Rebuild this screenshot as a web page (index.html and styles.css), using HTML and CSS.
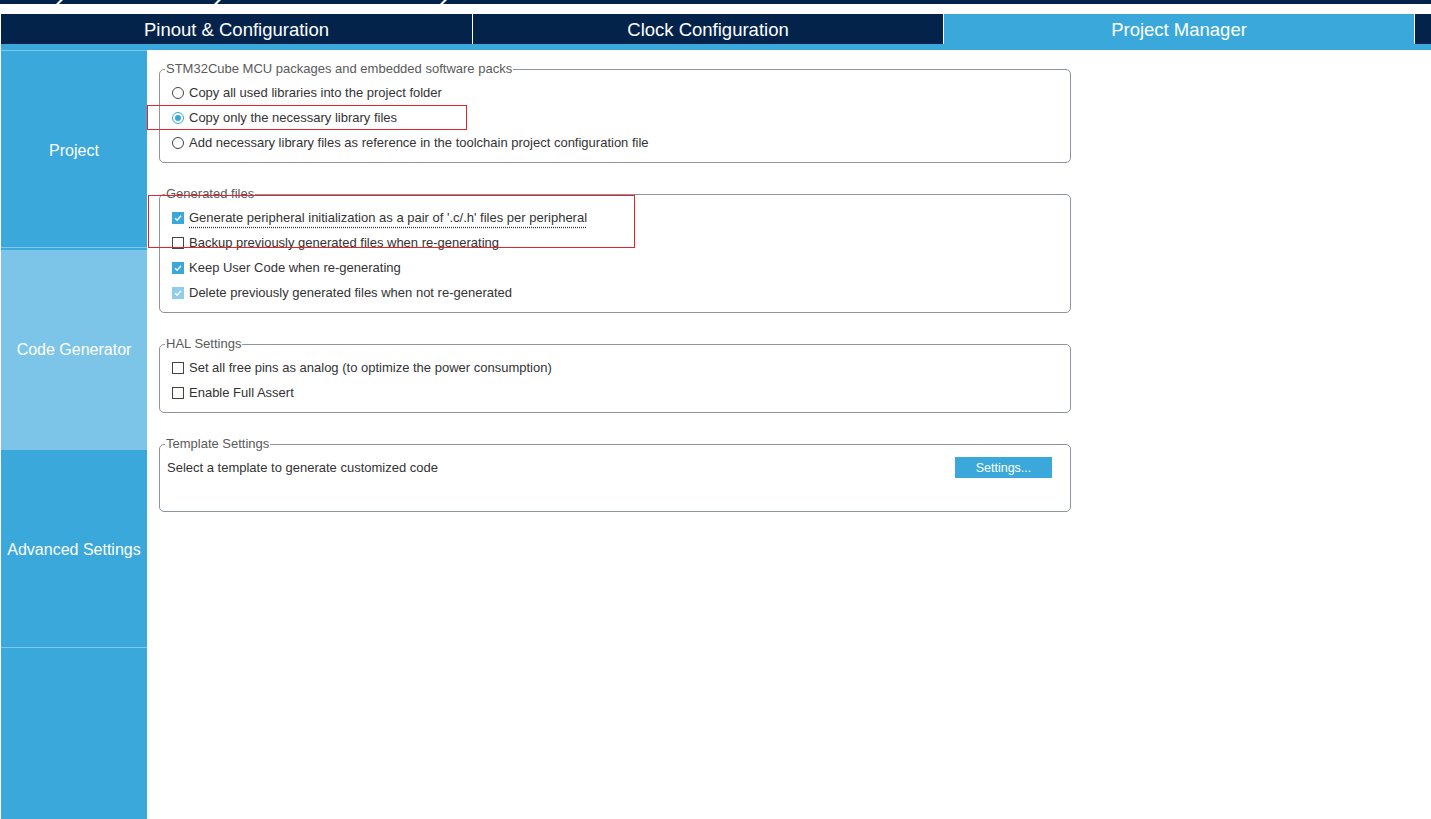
FILE: index.html
```html
<!DOCTYPE html>
<html lang="en">
<head>
  <meta charset="UTF-8" />
  <title>Project Manager</title>
  <link rel="stylesheet" href="styles.css">
</head>
<body>
  <div class="crumbs">
    <span class="c1"></span>
    <span class="c2"></span>
    <span class="c3"></span>
    <span class="c4"></span>
  </div>

  <nav class="tabs">
    <div class="tab first">Pinout &amp; Configuration</div>
    <div class="tab">Clock Configuration</div>
    <div class="tab active">Project Manager</div>
    <div class="tab-end"></div>
  </nav>
  <div class="band"></div>

  <div class="layout">
    <aside class="side">
      <div class="side-item">Project</div>
      <div class="side-item active">Code Generator</div>
      <div class="side-item">Advanced Settings</div>
      <div class="side-item"></div>
    </aside>

    <main class="content">
      <fieldset class="group">
        <legend>STM32Cube MCU packages and embedded software packs</legend>
        <div class="opts">
          <label class="opt"><span class="radio"></span>Copy all used libraries into the project folder</label>
          <label class="opt"><span class="radio on"></span>Copy only the necessary library files</label>
          <label class="opt"><span class="radio"></span>Add necessary library files as reference in the toolchain project configuration file</label>
        </div>
      </fieldset>

      <fieldset class="group">
        <legend>Generated files</legend>
        <div class="opts">
          <label class="opt">
            <span class="check on"><svg viewBox="0 0 12 12"><path d="M2.5 6.2 L5 8.6 L9.6 3.4" /></svg></span>
            <span class="focus">Generate peripheral initialization as a pair of '.c/.h' files per peripheral</span>
          </label>
          <label class="opt"><span class="check"></span>Backup previously generated files when re-generating</label>
          <label class="opt">
            <span class="check on"><svg viewBox="0 0 12 12"><path d="M2.5 6.2 L5 8.6 L9.6 3.4" /></svg></span>
            Keep User Code when re-generating
          </label>
          <label class="opt">
            <span class="check on dim"><svg viewBox="0 0 12 12"><path d="M2.5 6.2 L5 8.6 L9.6 3.4" /></svg></span>
            Delete previously generated files when not re-generated
          </label>
        </div>
      </fieldset>

      <fieldset class="group">
        <legend>HAL Settings</legend>
        <div class="opts">
          <label class="opt"><span class="check"></span>Set all free pins as analog (to optimize the power consumption)</label>
          <label class="opt"><span class="check"></span>Enable Full Assert</label>
        </div>
      </fieldset>

      <fieldset class="group template">
        <legend>Template Settings</legend>
        <div class="opts">
          <div class="tpl-row">
            <span>Select a template to generate customized code</span>
            <button class="btn">Settings...</button>
          </div>
        </div>
      </fieldset>

      <div class="mark mark-1"></div>
      <div class="mark mark-2"></div>
    </main>
  </div>
</body>
</html>
```

FILE: styles.css
```css
body {
  margin: 0;
  font-family: "Liberation Sans", Arial, sans-serif;
  background-color: #fff;
  height: 819px;
  overflow: hidden;
}
.crumbs {
  display: flex;
  gap: 3px;
  height: 4px;
  overflow: hidden;
  margin-bottom: 10px;
}
.crumbs span {
  background-color: #03234b;
  transform: skewX(-45deg);
}
.crumbs .c1 {
  width: 62px;
  margin-left: -4px;
}
.crumbs .c2 {
  width: 155px;
}
.crumbs .c3 {
  width: 223px;
}
.crumbs .c4 {
  flex: 1;
  margin-right: -4px;
}
.tabs {
  display: flex;
  gap: 1px;
  height: 30px;
  padding-left: 1px;
}
.tab {
  width: 470px;
  background-color: #03234b;
  color: #fff;
  font-size: 18.5px;
  display: flex;
  align-items: center;
  justify-content: center;
  padding-top: 1px;
  box-sizing: border-box;
}
.tab.first {
  width: 471px;
}
.tab.active {
  background-color: #3aa8db;
}
.tab-end {
  flex: 1;
  background-color: #03234b;
}
.band {
  height: 6px;
  margin-left: 1px;
  background-color: #3aa8db;
}
.layout {
  display: flex;
  height: 769px;
}
.side {
  width: 146px;
  margin-left: 1px;
  background-color: #3aa8db;
  border-top: 1px solid #7fc8ec;
  box-sizing: border-box;
  display: flex;
  flex-direction: column;
}
.side-item {
  height: 200px;
  flex-shrink: 0;
  display: flex;
  align-items: center;
  justify-content: center;
  color: #fff;
  font-size: 16px;
  background-color: #3aa8db;
  box-shadow: inset 0 -2px 0 #3aa8db, inset 0 -3px 0 #7fc8ec;
}
.side-item:first-child {
  height: 199px;
}
.side-item.active {
  background-color: #7dc5e8;
  box-shadow: none;
}
.content {
  position: relative;
  flex: 1;
  padding: 12px 0 0 12px;
}
.group {
  width: 912px;
  box-sizing: border-box;
  margin: 0 0 24px 0;
  border: 1px solid #8e949b;
  border-radius: 5px;
  padding: 0 8px 7px 5px;
}
.group legend {
  font-size: 13px;
  line-height: 14px;
  padding: 0 1px;
  color: #5a5a5a;
}
.opts {
  padding-top: 4px;
}
.opt {
  display: flex;
  align-items: center;
  gap: 5px;
  height: 25px;
  padding-left: 7px;
  font-size: 13px;
  color: #333;
}
.radio {
  width: 12px;
  height: 12px;
  box-sizing: border-box;
  border: 1px solid #444;
  border-radius: 50%;
  display: flex;
  align-items: center;
  justify-content: center;
  background-color: #fff;
}
.radio.on {
  border-color: #3aa8db;
}
.radio.on::after {
  content: "";
  width: 6px;
  height: 6px;
  border-radius: 50%;
  background-color: #3aa8db;
}
.check {
  width: 12px;
  height: 12px;
  box-sizing: border-box;
  border: 1px solid #444;
  background-color: #fff;
  flex-shrink: 0;
}
.check.on {
  border-color: #3aa8db;
  background-color: #3aa8db;
}
.check.dim {
  border-color: #8fcdea;
  background-color: #8fcdea;
}
.check svg {
  display: block;
  width: 10px;
  height: 10px;
}
.check path {
  fill: none;
  stroke: #fff;
  stroke-width: 1.8;
}
.focus {
  text-decoration: underline dotted #333;
  text-underline-offset: 5px;
}
.template {
  padding-bottom: 31px;
}
.tpl-row {
  display: flex;
  align-items: center;
  justify-content: space-between;
  height: 25px;
  padding-left: 2px;
  margin-right: 10px;
  font-size: 13px;
  color: #333;
}
.btn {
  width: 97px;
  height: 21px;
  border: none;
  background-color: #3aa8db;
  color: #fff;
  font-family: inherit;
  font-size: 12.5px;
  padding: 0;
}
.mark {
  position: absolute;
  border: 1px solid #e0262b;
  box-sizing: border-box;
}
.mark-1 {
  left: 0;
  top: 55px;
  width: 320px;
  height: 25px;
}
.mark-2 {
  left: 1px;
  top: 145px;
  width: 487px;
  height: 53px;
}
```
